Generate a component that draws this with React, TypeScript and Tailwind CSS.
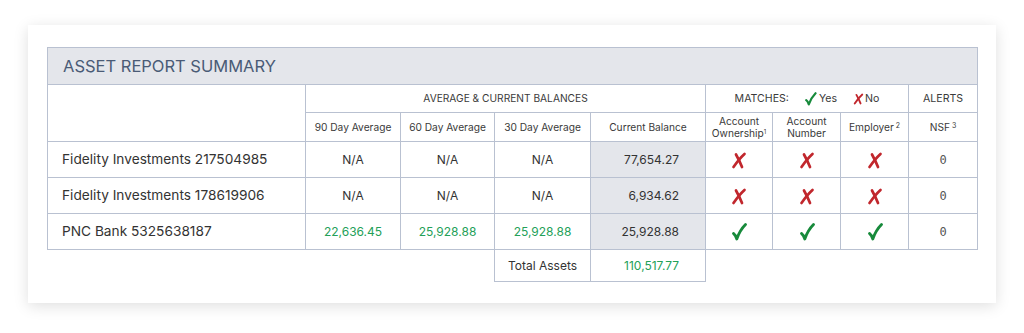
import React from "react";

const B = "border border-[#b9c1d1]";

function Check() {
  return (
    <svg width="16" height="18" viewBox="0 0 16 18" className="inline-block">
      <path d="M2.5 10.5 C4 11.5 5 13.5 5.8 16 C8 9.5 11 5 14.5 1.5" fill="none" stroke="#178a3b" strokeWidth="2.8" strokeLinecap="round" strokeLinejoin="round" />
    </svg>
  );
}

function Cross({ size = 16 }: { size?: number }) {
  return (
    <svg width={size} height={size + 1} viewBox="0 0 16 17" className="inline-block">
      <path d="M5 2.5 C7 6 9 10 11 15" fill="none" stroke="#c1272d" strokeWidth="2.7" strokeLinecap="round" />
      <path d="M13.5 2 C9 6 6 10 2.5 15" fill="none" stroke="#c1272d" strokeWidth="2.7" strokeLinecap="round" />
    </svg>
  );
}

function SmallCheck() {
  return (
    <svg width="13" height="14" viewBox="0 0 16 18" className="inline-block">
      <path d="M2.5 10.5 C4 11.5 5 13.5 5.8 16 C8 9.5 11 5 14.5 1.5" fill="none" stroke="#178a3b" strokeWidth="2.8" strokeLinecap="round" strokeLinejoin="round" />
    </svg>
  );
}

type Row = {
  name: string;
  d90: string;
  d60: string;
  d30: string;
  cb: string;
  green: boolean;
  ok: boolean;
};

const rows: Row[] = [
  { name: "Fidelity Investments 217504985", d90: "N/A", d60: "N/A", d30: "N/A", cb: "77,654.27", green: false, ok: false },
  { name: "Fidelity Investments 178619906", d90: "N/A", d60: "N/A", d30: "N/A", cb: "6,934.62", green: false, ok: false },
  { name: "PNC Bank 5325638187", d90: "22,636.45", d60: "25,928.88", d30: "25,928.88", cb: "25,928.88", green: true, ok: true },
];

export default function App() {
  return (
    <div className="w-[1024px] h-[333px] bg-white pt-[25px] pl-[28px]" style={{ fontFamily: "Inter, 'Liberation Sans', sans-serif" }}>
      <div className="w-[968px] h-[278px] bg-white shadow-[0_3px_14px_rgba(0,0,0,0.13)] pt-[22px] pl-[19px]">
        <table className="table-fixed border-collapse w-[930px] text-[#333]">
          <colgroup>
            <col className="w-[258px]" />
            <col className="w-[95px]" />
            <col className="w-[94px]" />
            <col className="w-[96px]" />
            <col className="w-[115px]" />
            <col className="w-[67px]" />
            <col className="w-[68px]" />
            <col className="w-[68px]" />
            <col className="w-[69px]" />
          </colgroup>
          <tbody>
            <tr className="h-[37px]">
              <td colSpan={9} className={`${B} bg-[#e4e6eb] pl-[15px] pt-[1px] text-[16.5px] text-[#4a5b76]`}>
                ASSET REPORT SUMMARY
              </td>
            </tr>
            <tr className="h-[28px] text-[10.2px] text-[#3a3a3a]">
              <td rowSpan={2} className={B}></td>
              <td colSpan={4} className={`${B} text-center`}>AVERAGE &amp; CURRENT BALANCES</td>
              <td colSpan={3} className={`${B} text-center`}>
                <span className="inline-flex items-center text-[10.6px]">
                  MATCHES:
                  <span className="ml-[15px] mr-[2px]"><SmallCheck /></span>Yes
                  <span className="ml-[16px] mr-[1px]"><Cross size={11} /></span>No
                </span>
              </td>
              <td className={`${B} text-center text-[10.6px]`}>ALERTS</td>
            </tr>
            <tr className="h-[29px] text-[10.2px] text-[#3a3a3a] leading-[12px]">
              <td className={`${B} text-center`}>90 Day Average</td>
              <td className={`${B} text-center`}>60 Day Average</td>
              <td className={`${B} text-center`}>30 Day Average</td>
              <td className={`${B} text-center`}>Current Balance</td>
              <td className={`${B} text-center`}>Account<br />Ownership<sup className="text-[6px]">1</sup></td>
              <td className={`${B} text-center`}>Account<br />Number</td>
              <td className={`${B} text-center`}>Employer<sup className="text-[7px] ml-[2px]">2</sup></td>
              <td className={`${B} text-center`}>NSF<sup className="text-[7px] ml-[2px]">3</sup></td>
            </tr>
            {rows.map((r) => {
              const numCls = r.green ? "text-[#23a058]" : "text-[#333]";
              return (
                <tr key={r.name} className="h-[36px] text-[12px]">
                  <td className={`${B} pl-[14px] text-[13.7px] text-[#333]`}>{r.name}</td>
                  <td className={`${B} text-center ${numCls}`}>{r.d90}</td>
                  <td className={`${B} text-center ${numCls}`}>{r.d60}</td>
                  <td className={`${B} text-center ${numCls}`}>{r.d30}</td>
                  <td className={`${B} bg-[#e4e6eb] text-right pr-[26px] text-[#333]`}>{r.cb}</td>
                  <td className={`${B} text-center`}>{r.ok ? <Check /> : <Cross />}</td>
                  <td className={`${B} text-center`}>{r.ok ? <Check /> : <Cross />}</td>
                  <td className={`${B} text-center`}>{r.ok ? <Check /> : <Cross />}</td>
                  <td className={`${B} text-center text-[12px] text-[#555]`} style={{ fontFamily: "'DejaVu Sans Mono', monospace" }}>0</td>
                </tr>
              );
            })}
            <tr className="h-[32px] text-[12px]">
              <td colSpan={3}></td>
              <td className={`${B} text-center text-[#333]`}>Total Assets</td>
              <td className={`${B} text-right pr-[26px] text-[#23a058]`}>110,517.77</td>
              <td colSpan={4}></td>
            </tr>
          </tbody>
        </table>
      </div>
    </div>
  );
}
